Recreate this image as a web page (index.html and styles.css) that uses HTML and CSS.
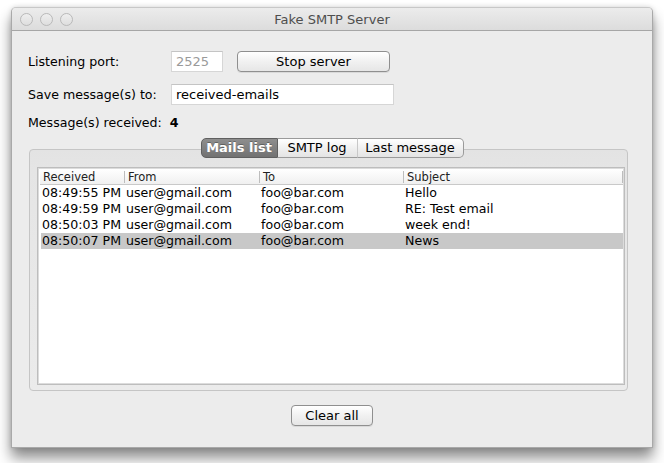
FILE: index.html
```html
<!DOCTYPE html>
<html>
<head>
<meta charset="utf-8">
<link rel="stylesheet" href="styles.css">
</head>
<body>
<div class="window">
  <div class="titlebar">
    <div class="lights"><span class="light"></span><span class="light"></span><span class="light"></span></div>
    <div class="title">Fake SMTP Server</div>
  </div>
  <div class="content">
    <div class="row row-port">
      <div class="label">Listening port:</div>
      <div class="field field-port">2525</div>
      <div class="button btn-stop">Stop server</div>
    </div>
    <div class="row row-save">
      <div class="label">Save message(s) to:</div>
      <div class="field field-save">received-emails</div>
    </div>
    <div class="row row-count">
      <div class="label label-count">Message(s) received:</div>
      <div class="count">4</div>
    </div>
    <div class="tabs-wrap">
      <div class="tabs">
        <div class="tab tab-active">Mails list</div>
        <div class="tab tab-mid">SMTP log</div>
        <div class="tab tab-last">Last message</div>
      </div>
      <div class="panel">
        <div class="table">
          <div class="thead">
            <div class="th c1">Received</div>
            <div class="th c2">From</div>
            <div class="th c3">To</div>
            <div class="th c4">Subject</div>
            <div class="th c5"></div>
          </div>
          <div class="tr">
            <div class="td c1">08:49:55 PM</div>
            <div class="td c2">user@gmail.com</div>
            <div class="td c3">foo@bar.com</div>
            <div class="td c4">Hello</div>
          </div>
          <div class="tr">
            <div class="td c1">08:49:59 PM</div>
            <div class="td c2">user@gmail.com</div>
            <div class="td c3">foo@bar.com</div>
            <div class="td c4">RE: Test email</div>
          </div>
          <div class="tr">
            <div class="td c1">08:50:03 PM</div>
            <div class="td c2">user@gmail.com</div>
            <div class="td c3">foo@bar.com</div>
            <div class="td c4">week end!</div>
          </div>
          <div class="tr tr-selected">
            <div class="td c1">08:50:07 PM</div>
            <div class="td c2">user@gmail.com</div>
            <div class="td c3">foo@bar.com</div>
            <div class="td c4">News</div>
          </div>
        </div>
      </div>
    </div>
    <div class="footer">
      <div class="button btn-clear">Clear all</div>
    </div>
  </div>
</div>
</body>
</html>
```
FILE: styles.css
```css
html, body {
  margin: 0;
  padding: 0;
  background: #ffffff;
}
body {
  font-family: "DejaVu Sans", "Liberation Sans", sans-serif;
  font-size: 12.6px;
  color: #000;
  padding: 7px 11px 0 11px;
  height: 463px;
  box-sizing: border-box;
}
.window {
  width: 642px;
  height: 441px;
  box-sizing: border-box;
  background: #ececec;
  border: 1px solid #a9a9a9;
  border-top-color: #c8c8c8;
  border-radius: 5px 5px 0 0;
  box-shadow: 0 10px 14px rgba(0,0,0,0.45), 0 0 5px rgba(0,0,0,0.15);
  display: flex;
  flex-direction: column;
  overflow: hidden;
}
.titlebar {
  height: 22px;
  flex: 0 0 22px;
  background: linear-gradient(#ececec, #dcdcdc);
  border-bottom: 1px solid #a6a6a6;
  display: flex;
  align-items: center;
  position: relative;
}
.lights {
  display: flex;
  gap: 7px;
  padding-left: 8px;
}
.light {
  width: 11px;
  height: 11px;
  border-radius: 50%;
  border: 1px solid #b9b9b9;
  background: linear-gradient(#eeeeee, #dedede);
}
.title {
  position: absolute;
  left: 0;
  right: 0;
  text-align: center;
  font-size: 13px;
  color: #4e4e4e;
}
.content {
  flex: 1;
  padding: 20px 0 0 16px;
  display: flex;
  flex-direction: column;
}
.row {
  display: flex;
  align-items: center;
}
.label {
  width: 143px;
  flex: 0 0 143px;
}
.row-port { height: 21px; }
.row-save { height: 21px; margin-top: 12px; }
.row-count { height: 16px; margin-top: 9px; }
.label-count { width: auto; flex: 0 0 auto; margin-right: 8px; }
.count { font-weight: bold; }
.field {
  height: 21px;
  box-sizing: border-box;
  background: #fff;
  border: 1px solid #d6d6d6;
  border-top-color: #c4c4c4;
  padding: 0 4px;
  line-height: 19px;
  font-size: 13px;
}
.field-port { width: 52px; color: #9a9a9a; }
.field-save { width: 223px; }
.button {
  height: 21px;
  box-sizing: border-box;
  border: 1px solid #8f8f8f;
  border-radius: 4px;
  background: linear-gradient(#ffffff, #f1f1f1 50%, #e6e6e6);
  text-align: center;
  line-height: 19px;
  font-size: 13px;
  box-shadow: 0 1px 0 rgba(0,0,0,0.08);
}
.btn-stop { width: 153px; margin-left: 14px; }
.tabs-wrap {
  margin-top: 8px;
  display: flex;
  flex-direction: column;
}
.tabs {
  display: flex;
  justify-content: center;
  margin-left: -16px;
  height: 20px;
  margin-bottom: -9px;
  position: relative;
  z-index: 1;
}
.tab {
  height: 20px;
  box-sizing: border-box;
  border: 1px solid #9a9a9a;
  background: linear-gradient(#ffffff, #f0f0f0 50%, #e4e4e4);
  line-height: 18px;
  font-size: 13px;
  text-align: center;
}
.tab-active {
  width: 77px;
  border-radius: 5px 0 0 5px;
  background: linear-gradient(#8e8e8e, #727272);
  border-color: #606060;
  color: #fff;
  font-weight: bold;
  text-shadow: 0 -1px 0 rgba(0,0,0,0.3);
}
.tab-mid {
  width: 80px;
  border-left: none;
  border-right: 1px solid #c8c8c8;
}
.tab-last {
  width: 106px;
  border-left: none;
  border-radius: 0 5px 5px 0;
}
.panel {
  width: 599px;
  height: 242px;
  margin-left: 1px;
  box-sizing: border-box;
  border: 1px solid #c5c5c5;
  border-radius: 4px;
  background: linear-gradient(#e3e3e3, #e5e5e5 20px, #ebebeb);
  padding: 17px 2px 5px 7px;
  display: flex;
}
.table {
  flex: 1;
  min-width: 0;
  background: #fff;
  border: 1px solid #bdbdbd;
  box-shadow: inset 0 0 0 1px #dcdcdc;
  padding: 1px 1px 0 3px;
}
.thead {
  display: flex;
  height: 16px;
  box-sizing: border-box;
  border-bottom: 1px solid #c9c9c9;
  background: linear-gradient(#ffffff, #f0f0f0);
  font-size: 11.5px;
  color: #222;
  margin-left: -1px;
}
.th {
  padding-left: 3px;
  box-sizing: border-box;
  border-right: 1px solid #bdbdbd;
  height: 12px;
  margin-top: 2px;
  line-height: 12px;
}
.tr {
  display: flex;
  height: 16px;
  line-height: 16px;
  font-size: 12.6px;
}
.tr-selected { background: #c8c8c8; }
.td {
  box-sizing: border-box;
  padding-left: 1px;
  white-space: nowrap;
  overflow: hidden;
}
.c1 { width: 84px; flex: 0 0 84px; }
.c2 { width: 135px; flex: 0 0 135px; }
.c3 { width: 144px; flex: 0 0 144px; }
.c4 { flex: 1; min-width: 0; }
.thead .c1 { width: 85px; flex: 0 0 85px; }
.thead .c4 { flex: 0 0 219px; }
.c5 { flex: 1; border-right: none; }
.footer {
  display: flex;
  justify-content: center;
  margin-left: -16px;
  padding-top: 14px;
}
.btn-clear { width: 82px; }
```
